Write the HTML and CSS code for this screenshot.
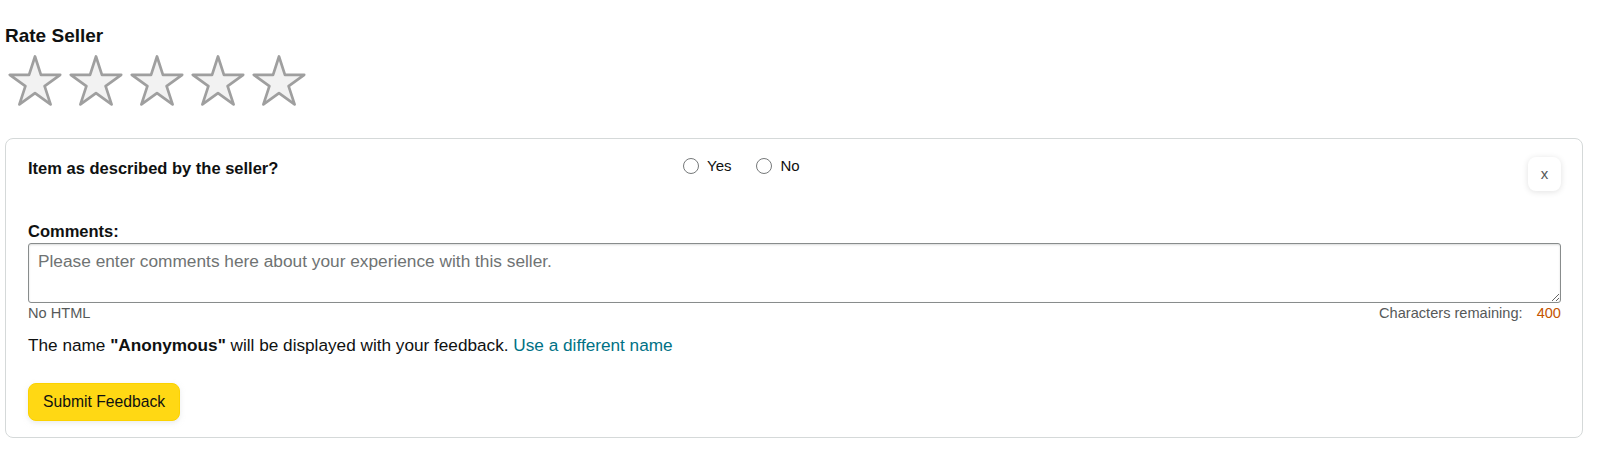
FILE: index.html
```html
<!DOCTYPE html>
<html lang="en">
<head>
<meta charset="utf-8">
<title>Rate Seller</title>
<link rel="stylesheet" href="styles.css">
</head>
<body>
<div class="page">
  <h2 class="rate-title">Rate Seller</h2>
  <div class="stars">
    <svg class="star" viewBox="0 0 60 53" aria-label="1 star"><polygon points="30,2.5 35.94,20.83 55.2,20.8 39.61,32.12 45.58,50.44 30,39.1 14.42,50.44 20.39,32.12 4.8,20.8 24.06,20.83"/></svg>
    <svg class="star" viewBox="0 0 60 53" aria-label="2 stars"><polygon points="30,2.5 35.94,20.83 55.2,20.8 39.61,32.12 45.58,50.44 30,39.1 14.42,50.44 20.39,32.12 4.8,20.8 24.06,20.83"/></svg>
    <svg class="star" viewBox="0 0 60 53" aria-label="3 stars"><polygon points="30,2.5 35.94,20.83 55.2,20.8 39.61,32.12 45.58,50.44 30,39.1 14.42,50.44 20.39,32.12 4.8,20.8 24.06,20.83"/></svg>
    <svg class="star" viewBox="0 0 60 53" aria-label="4 stars"><polygon points="30,2.5 35.94,20.83 55.2,20.8 39.61,32.12 45.58,50.44 30,39.1 14.42,50.44 20.39,32.12 4.8,20.8 24.06,20.83"/></svg>
    <svg class="star" viewBox="0 0 60 53" aria-label="5 stars"><polygon points="30,2.5 35.94,20.83 55.2,20.8 39.61,32.12 45.58,50.44 30,39.1 14.42,50.44 20.39,32.12 4.8,20.8 24.06,20.83"/></svg>
  </div>

  <section class="feedback-box">
    <button class="close-btn" type="button">x</button>
    <div class="question-row">
      <span class="question">Item as described by the seller?</span>
      <div class="choices">
        <label class="choice"><input class="radio" type="radio" name="described"><span>Yes</span></label>
        <label class="choice"><input class="radio" type="radio" name="described"><span>No</span></label>
      </div>
    </div>

    <label class="comments-label" for="comments">Comments:</label>
    <textarea id="comments" class="comments" placeholder="Please enter comments here about your experience with this seller."></textarea>
    <div class="meta-row">
      <span>No HTML</span>
      <span class="remaining"><span>Characters remaining:</span><span class="count">400</span></span>
    </div>

    <p class="name-line">The name <b>"Anonymous"</b> will be displayed with your feedback. <a class="link" href="#">Use a different name</a></p>

    <button class="submit-btn" type="button">Submit Feedback</button>
  </section>
</div>
</body>
</html>
```

FILE: styles.css
```css
* { box-sizing: border-box; }

body {
  margin: 0;
  background: #ffffff;
  color: #0f1111;
  font-family: "Liberation Sans", Arial, sans-serif;
}

.page {
  padding: 24px 17px 0 5px;
}

.rate-title {
  margin: 0;
  font-size: 19px;
  line-height: 24px;
  font-weight: 700;
}

.stars {
  display: flex;
  gap: 1px;
  margin-top: 6px;
}

.star {
  display: block;
  width: 60px;
  height: 53px;
  filter: blur(0.45px);
}

.star polygon {
  fill: #f2f2f2;
  stroke: #9f9f9f;
  stroke-width: 2.7;
  stroke-linejoin: round;
}

.feedback-box {
  position: relative;
  margin-top: 31px;
  border: 1px solid #d5d9d9;
  border-radius: 8px;
  padding: 19px 21px 16px 22px;
}

.close-btn {
  position: absolute;
  top: 18px;
  right: 21px;
  width: 33px;
  height: 34px;
  padding: 0;
  border: 0;
  border-radius: 8px;
  background: #ffffff;
  box-shadow: 0 1px 6px rgba(15, 17, 17, 0.12);
  color: #565959;
  font-family: "Liberation Sans", Arial, sans-serif;
  font-size: 15px;
  line-height: 34px;
}

.question-row {
  display: flex;
  align-items: flex-start;
  height: 20px;
}

.question {
  flex: none;
  width: 655px;
  font-size: 16.5px;
  line-height: 20px;
  font-weight: 700;
}

.choices {
  display: flex;
  gap: 25px;
}

.choice {
  display: flex;
  align-items: center;
  gap: 8px;
  height: 16px;
  font-size: 15px;
  line-height: 16px;
}

.radio {
  appearance: none;
  -webkit-appearance: none;
  margin: 0;
  width: 16px;
  height: 16px;
  border: 1.3px solid #76797a;
  border-radius: 50%;
  background: #ffffff;
}

.comments-label {
  display: block;
  margin: 43px 0 2px;
  font-size: 16.5px;
  line-height: 20px;
  font-weight: 700;
}

.comments {
  display: block;
  width: 100%;
  height: 60px;
  margin: 0;
  padding: 7px 9px;
  border: 1px solid #888c8c;
  border-radius: 3px;
  box-shadow: 0 1px 2px rgba(15, 17, 17, 0.15) inset;
  font-family: "Liberation Sans", Arial, sans-serif;
  font-size: 17.3px;
  line-height: 20px;
  color: #0f1111;
}

.comments::placeholder {
  color: #6f7373;
}

.meta-row {
  display: flex;
  justify-content: space-between;
  margin-top: 1px;
  font-size: 14.6px;
  line-height: 18px;
  color: #565959;
}

.remaining {
  display: flex;
  gap: 14px;
}

.count {
  color: #c45500;
}

.name-line {
  margin: 13px 0 0;
  font-size: 17.2px;
  line-height: 20px;
}

.link {
  color: #007185;
  text-decoration: none;
}

.submit-btn {
  display: block;
  margin-top: 28px;
  height: 38px;
  padding: 0 14px;
  border: 1px solid #fcd200;
  border-radius: 8px;
  background: #ffd814;
  box-shadow: 0 2px 5px rgba(213, 217, 217, 0.5);
  color: #0f1111;
  font-family: "Liberation Sans", Arial, sans-serif;
  font-size: 15.7px;
}
```
